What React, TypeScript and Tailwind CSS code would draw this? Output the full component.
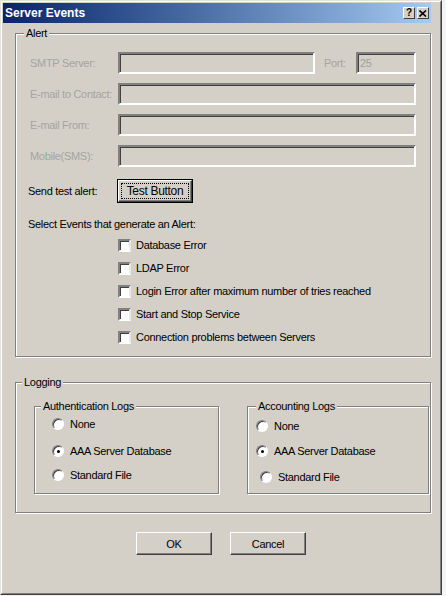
import * as React from 'react';

const face = 'bg-[#d4d0c8]';

function GroupBox({
  title,
  titleLeft,
  className,
  children,
}: {
  title: string;
  titleLeft: string;
  className: string;
  children?: React.ReactNode;
}) {
  return (
    <div
      className={`relative border border-[#808080] shadow-[1px_1px_0_#fff,inset_1px_1px_0_#fff] ${className}`}
    >
      <span
        className={`absolute -top-[8px] ${titleLeft} px-[2px] ${face} leading-[14px] text-black`}
      >
        {title}
      </span>
      {children}
    </div>
  );
}

function TextBox({ width, value }: { width: string; value?: string }) {
  return (
    <div
      className={`${width} h-[22px] border-2 border-t-[#808080] border-l-[#808080] border-b-white border-r-white shadow-[inset_1px_1px_0_#404040] ${face} flex items-center pl-[2px] text-[#a0a09c]`}
    >
      {value}
    </div>
  );
}

function Checkbox({ label }: { label: string }) {
  return (
    <div className="flex h-[16px] items-center pl-[102px]">
      <div className="w-[13px] h-[13px] bg-white border-2 border-t-[#808080] border-l-[#808080] border-b-white border-r-[#e8e8e8] shadow-[inset_1px_1px_0_#404040]" />
      <span className="ml-[5px] leading-[14px]">{label}</span>
    </div>
  );
}

function Radio({ label, checked, className }: { label: string; checked?: boolean; className: string }) {
  return (
    <div className={`flex h-[14px] items-center ${className}`}>
      <div className="relative w-[12px] h-[12px] rounded-full bg-white border border-t-[#808080] border-l-[#808080] border-b-white border-r-white shadow-[inset_1px_1px_0_#404040]">
        {checked && (
          <div className="absolute left-[3.5px] top-[3.5px] w-[3px] h-[3px] rounded-full bg-black" />
        )}
      </div>
      <span className="ml-[6px] leading-[14px]">{label}</span>
    </div>
  );
}

function PushButton({ label }: { label: string }) {
  return (
    <div className="w-[76px] h-[23px] border border-t-white border-l-white border-b-[#404040] border-r-[#404040] shadow-[inset_-1px_-1px_0_#808080] flex items-center justify-center leading-[14px]">
      {label}
    </div>
  );
}

export default function App() {
  return (
    <div
      className="w-[446px] h-[596px] bg-[#f4f4f4] text-[11px] tracking-[-0.3px] text-black"
      style={{ fontFamily: '"Liberation Sans", Arial, sans-serif' }}
    >
      <div className="w-[442px] h-[595px] border border-t-[#e4e2dc] border-l-[#e4e2dc] border-b-[#404040] border-r-[#404040]">
        <div className={`w-full h-full ${face} border border-t-white border-l-white border-b-[#808080] border-r-[#808080] p-[1px]`}>
          {/* title bar */}
          <div className="w-[428px] h-[20px] flex items-center bg-gradient-to-r from-[#0a246a] to-[#a6caf0] pl-[2px] pr-[2px]">
            <span className="text-white font-bold text-[12px] tracking-normal leading-[14px]">Server Events</span>
            <div className="ml-auto flex gap-[2px]">
              <div className="w-[12px] h-[12px] bg-[#d4d0c8] border border-t-white border-l-white border-b-[#404040] border-r-[#404040] flex items-center justify-center font-bold text-[10px] tracking-normal leading-none">
                ?
              </div>
              <div className="w-[12px] h-[12px] bg-[#d4d0c8] border border-t-white border-l-white border-b-[#404040] border-r-[#404040] flex items-center justify-center">
                <svg width="8" height="7" viewBox="0 0 8 7">
                  <path d="M0.5 0.5 L7 6.5 M7 0.5 L0.5 6.5" stroke="#000" strokeWidth="1.6" />
                </svg>
              </div>
            </div>
          </div>

          {/* Alert */}
          <GroupBox title="Alert" titleLeft="left-[8px]" className="ml-[12px] mt-[10px] w-[416px] h-[324px]">
            <div className="pt-[18px] flex flex-col gap-[9px]">
              <div className="flex items-center pl-[14px]">
                <span className="w-[88px] text-[#a4a4a0]">SMTP Server:</span>
                <TextBox width="w-[197px]" />
                <span className="ml-[9px] w-[32px] text-[#a4a4a0]">Port:</span>
                <TextBox width="w-[60px]" value="25" />
              </div>
              <div className="flex items-center pl-[14px]">
                <span className="w-[88px] text-[#a4a4a0]">E-mail to Contact:</span>
                <TextBox width="w-[298px]" />
              </div>
              <div className="flex items-center pl-[14px]">
                <span className="w-[88px] text-[#a4a4a0]">E-mail From:</span>
                <TextBox width="w-[298px]" />
              </div>
              <div className="flex items-center pl-[14px]">
                <span className="w-[88px] text-[#a4a4a0]">Mobile(SMS):</span>
                <TextBox width="w-[298px]" />
              </div>
            </div>

            <div className="mt-[12px] flex items-center pl-[12px]">
              <span className="w-[89px]">Send test alert:</span>
              <div className="w-[76px] h-[24px] border border-black">
                <div className="w-full h-full border border-t-white border-l-white border-b-[#404040] border-r-[#404040] shadow-[inset_-1px_-1px_0_#808080] p-[2px]">
                  <div className="w-full h-full border border-dotted border-black flex items-center justify-center leading-[14px] text-[12px]">
                    Test Button
                  </div>
                </div>
              </div>
            </div>

            <div className="mt-[14px] pl-[12px] leading-[14px]">Select Events that generate an Alert:</div>

            <div className="mt-[6px] flex flex-col gap-[7px]">
              <Checkbox label="Database Error" />
              <Checkbox label="LDAP Error" />
              <Checkbox label="Login Error after maximum number of tries reached" />
              <Checkbox label="Start and Stop Service" />
              <Checkbox label="Connection problems between Servers" />
            </div>
          </GroupBox>

          {/* Logging */}
          <GroupBox title="Logging" titleLeft="left-[6px]" className="ml-[12px] mt-[25px] w-[416px] h-[131px]">
            <div className="flex pt-[23px] pl-[18px]">
              <GroupBox title="Authentication Logs" titleLeft="left-[6px]" className="w-[185px] h-[88px]">
                <div className="pt-[10px] pl-[17px]">
                  <Radio label="None" className="" />
                  <Radio label="AAA Server Database" checked className="mt-[13px]" />
                  <Radio label="Standard File" className="mt-[10px]" />
                </div>
              </GroupBox>
              <GroupBox title="Accounting Logs" titleLeft="left-[8px]" className="ml-[28px] w-[182px] h-[88px]">
                <div className="pt-[12px]">
                  <Radio label="None" className="pl-[8px]" />
                  <Radio label="AAA Server Database" checked className="mt-[11px] pl-[8px]" />
                  <Radio label="Standard File" className="mt-[12px] pl-[12px]" />
                </div>
              </GroupBox>
            </div>
          </GroupBox>

          <div className="mt-[19px] flex justify-center gap-[18px]">
            <PushButton label="OK" />
            <PushButton label="Cancel" />
          </div>
        </div>
      </div>
    </div>
  );
}
